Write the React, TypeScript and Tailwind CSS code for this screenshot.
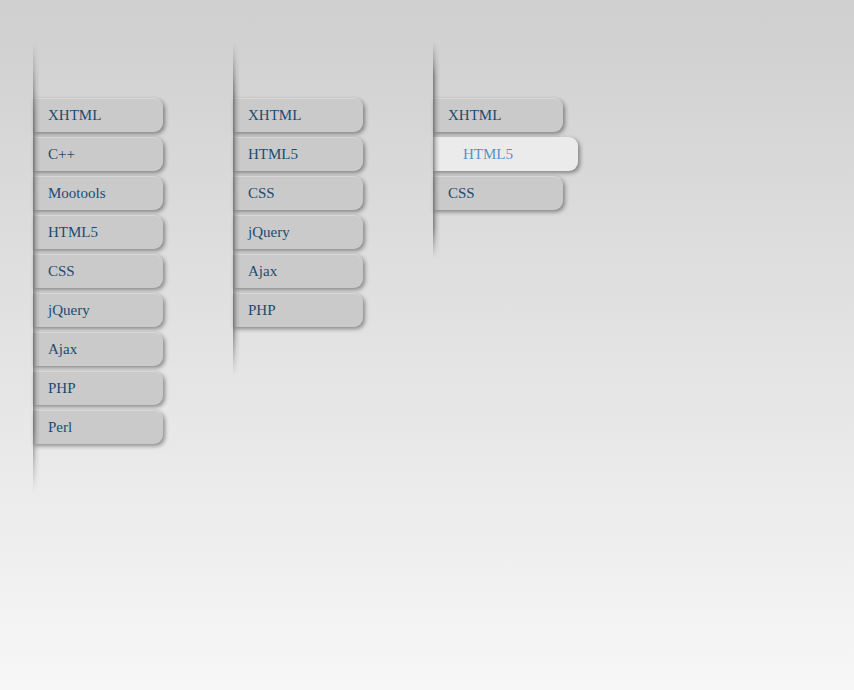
import React from "react";

type Column = { items: string[]; active?: string };

const columns: Column[] = [
  { items: ["XHTML", "C++", "Mootools", "HTML5", "CSS", "jQuery", "Ajax", "PHP", "Perl"] },
  { items: ["XHTML", "HTML5", "CSS", "jQuery", "Ajax", "PHP"] },
  { items: ["XHTML", "HTML5", "CSS"], active: "HTML5" },
];

function MenuItem({ label, active }: { label: string; active?: boolean }) {
  if (active) {
    return (
      <li className="flex h-[34px] w-[145px] items-center rounded-r-[9px] bg-[#ebebeb] pl-[30px] text-[15px] text-[#5295c5] shadow-[2px_2px_4px_rgba(0,0,0,0.4)]">
        {label}
      </li>
    );
  }
  return (
    <li className="flex h-[34px] w-[130px] items-center rounded-r-[9px] bg-[#cacaca] pl-[15px] text-[15px] text-[#1b4c6f] shadow-[2px_2px_4px_rgba(0,0,0,0.4),inset_0_1px_0_rgba(255,255,255,0.25)]">
      {label}
    </li>
  );
}

function Menu({ column }: { column: Column }) {
  return (
    <div className="relative w-[200px] pt-[56px] pb-[48px]">
      <ul className="flex flex-col gap-[5px]">
        {column.items.map((label) => (
          <MenuItem key={label} label={label} active={label === column.active} />
        ))}
      </ul>
      {/* vertical shadow strip on the left edge */}
      <div className="pointer-events-none absolute top-0 bottom-0 left-0 w-[7px] bg-[linear-gradient(to_right,rgba(0,0,0,0.42),rgba(0,0,0,0.12)_50%,rgba(0,0,0,0))] [mask-image:linear-gradient(to_bottom,transparent,black_16%,black_86%,transparent)]" />
    </div>
  );
}

export default function App() {
  return (
    <div
      className="h-[690px] w-full overflow-hidden bg-gradient-to-b from-[#cfcfcf] to-[#f7f7f7]"
      style={{ fontFamily: '"Liberation Serif", "Times New Roman", serif' }}
    >
      <div className="flex items-start pt-[42px] pl-[33px]">
        {columns.map((column, i) => (
          <Menu key={i} column={column} />
        ))}
      </div>
    </div>
  );
}
